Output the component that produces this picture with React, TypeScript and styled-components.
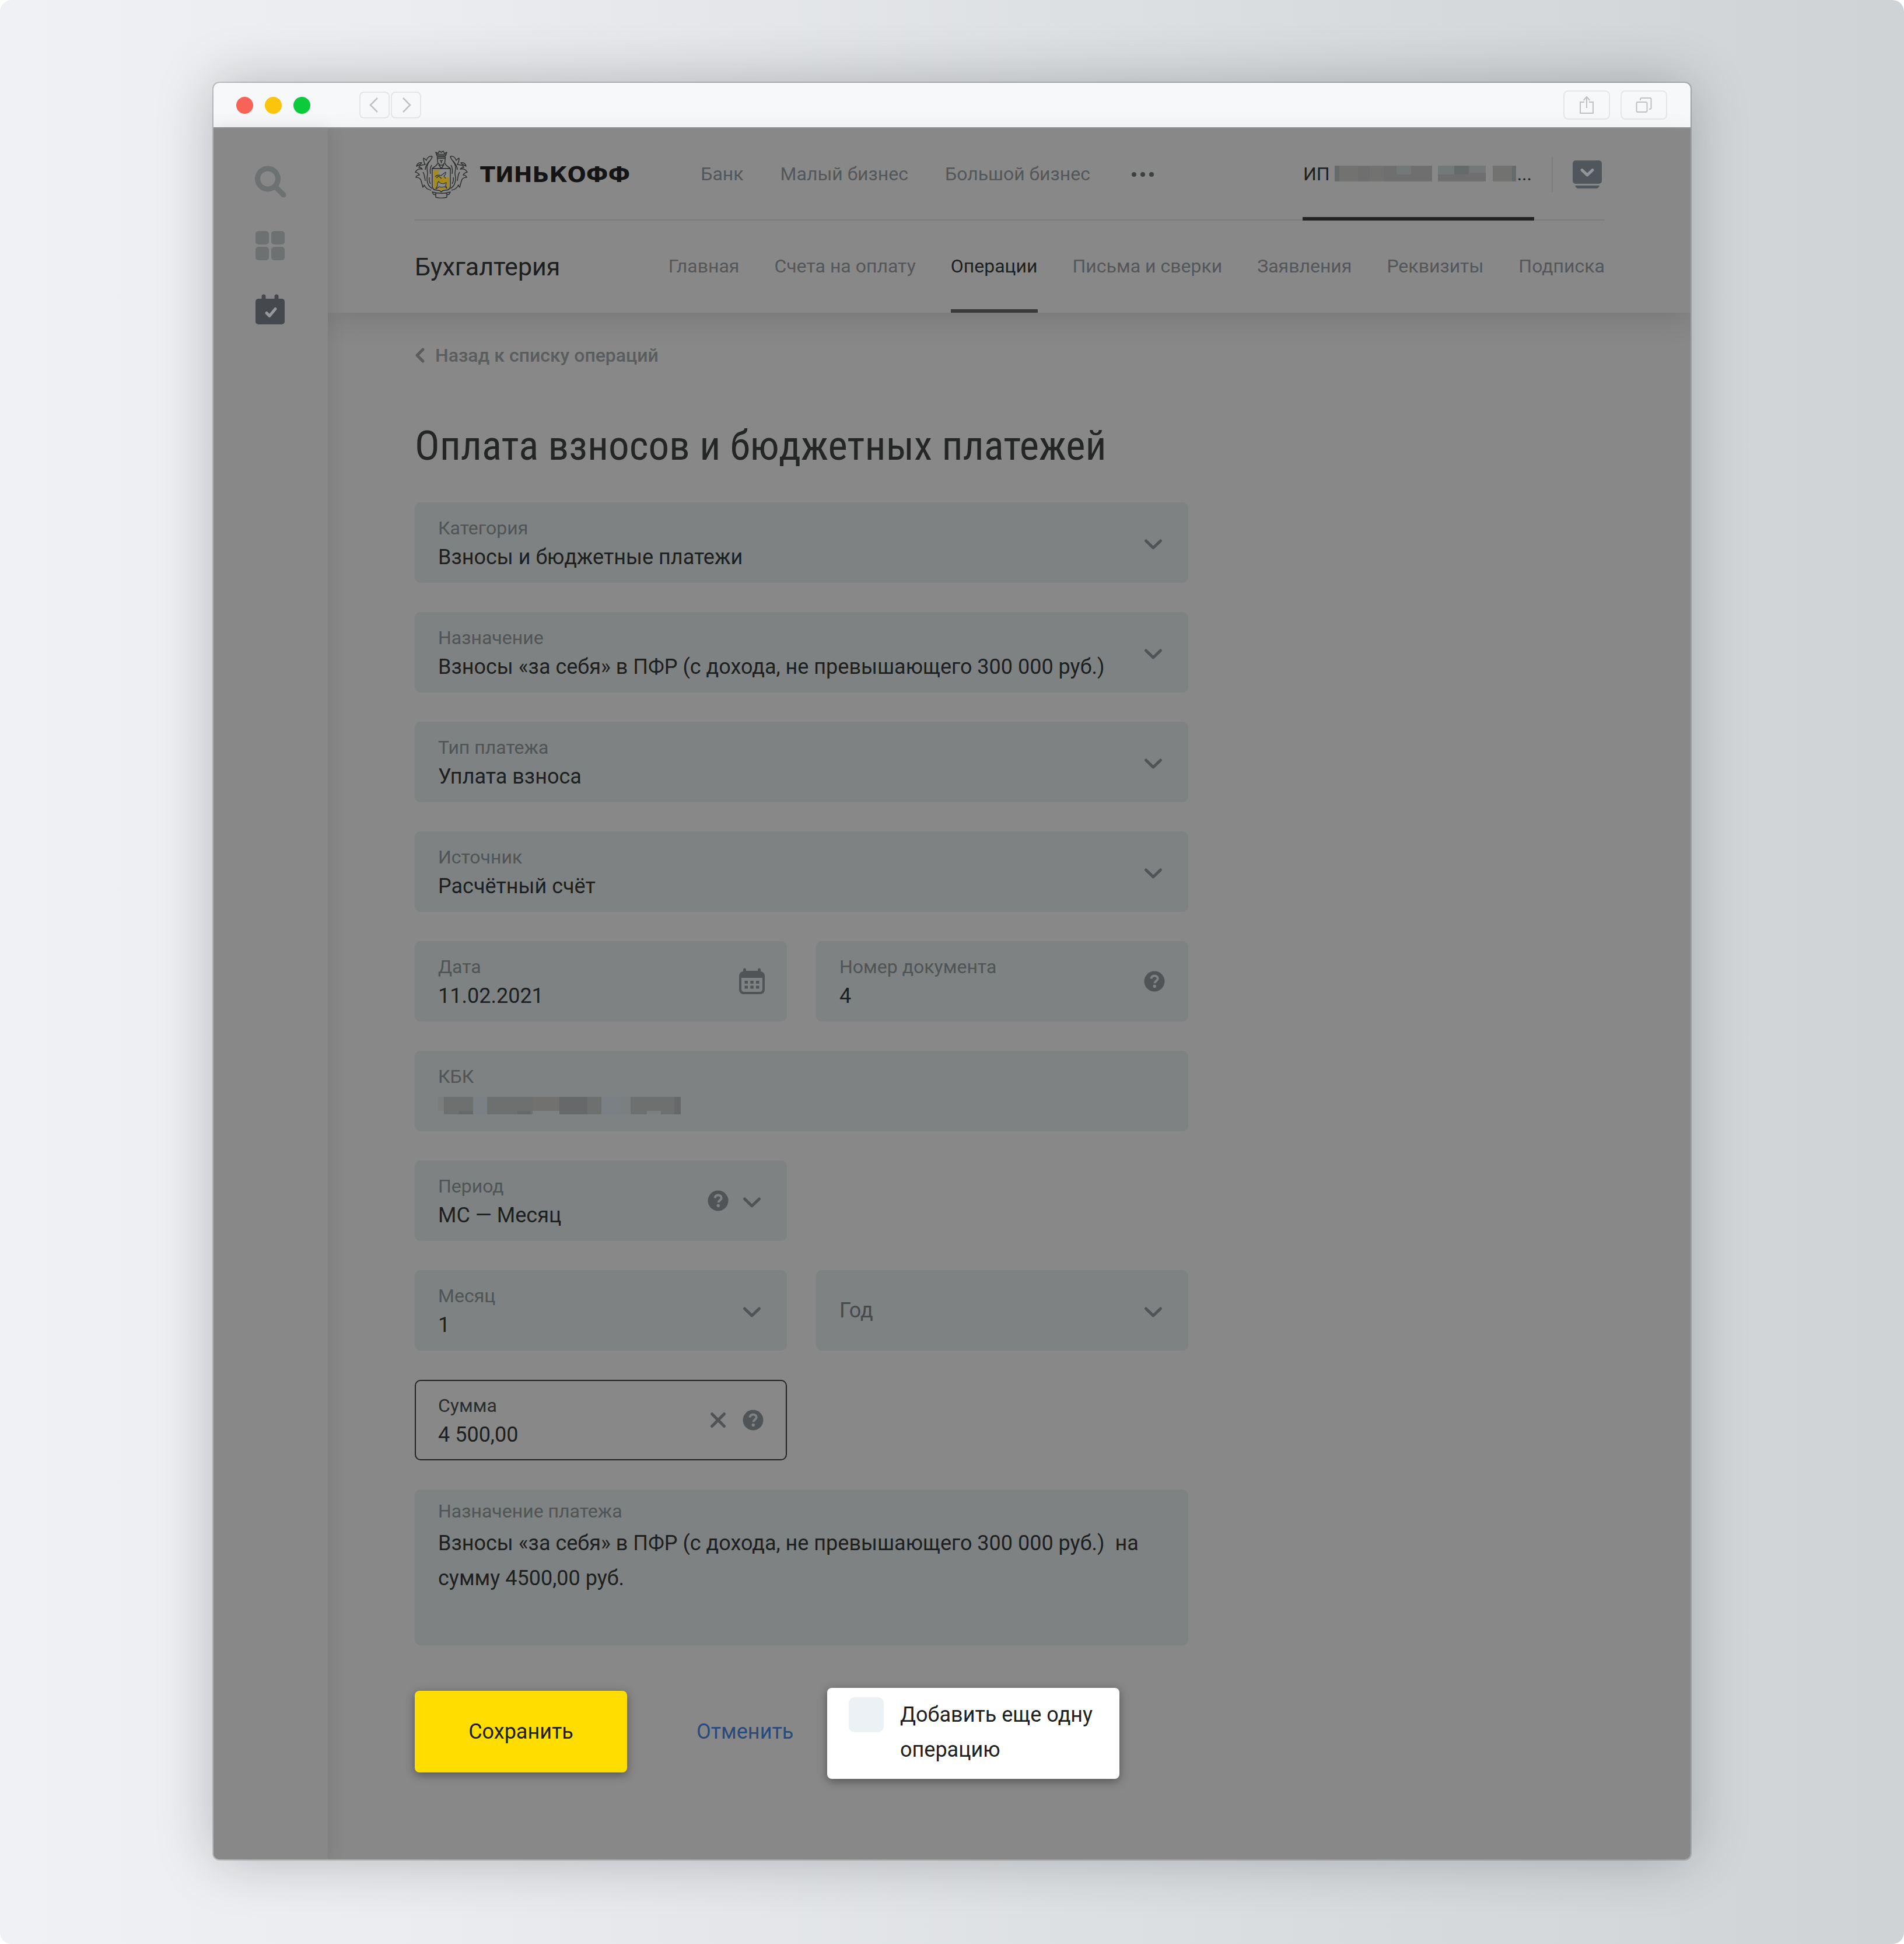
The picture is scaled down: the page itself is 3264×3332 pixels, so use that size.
import React from "react";
import styled, { createGlobalStyle, css } from "styled-components";

const ink = "#1d1f20";
const muted = "#54575a";
const iconTone = "#515456";
const surface = "#888888";
const fieldTone = "#7e8282";

const GlobalStyle = createGlobalStyle`
  *, *::before, *::after { box-sizing: border-box; }
  body {
    margin: 0;
    background: #ffffff;
    font-family: Roboto, "Liberation Sans", sans-serif;
    font-size: 32px;
    line-height: 40px;
    color: ${ink};
  }
  button, input, select, textarea { font: inherit; color: inherit; }
  svg { display: block; flex: none; }
`;

const plainButton = css`
  padding: 0;
  border: 0;
  background: none;
  cursor: pointer;
`;

const Backdrop = styled.div`
  min-height: 100vh;
  padding: 142px 366px;
  border-radius: 20px;
  background: linear-gradient(90deg, #f0f1f4, #ebecef 22%, #d6dadd 75%, #cfd3d6);
`;

const BrowserWindow = styled.div`
  border-radius: 10px;
  overflow: hidden;
  background: ${surface};
`;

const WindowShadow = styled.div`
  border-radius: 10px;
  box-shadow: 0 0 0 2px rgba(0, 0, 0, 0.16), 0 0 100px rgba(0, 0, 0, 0.24);
`;

const TitleBar = styled.div`
  display: flex;
  align-items: center;
  height: 78px;
  padding: 0 40px 0 39px;
  border-bottom: 2px solid #989a9a;
  background: #f6f8f9;
`;

const Lights = styled.div`
  display: flex;
  gap: 20px;
  margin-right: 84px;
`;

const Light = styled.span<{ $tone: string }>`
  width: 29px;
  height: 29px;
  border-radius: 50%;
  background: ${(p) => p.$tone};
`;

const NavPair = styled.div`
  display: flex;
  gap: 2px;
`;

const ToolPair = styled.div`
  display: flex;
  gap: 18px;
  margin-left: auto;
`;

const ChromeButton = styled.button<{ $wide?: boolean }>`
  ${plainButton}
  display: flex;
  align-items: center;
  justify-content: center;
  width: ${(p) => (p.$wide ? 80 : 52)}px;
  height: ${(p) => (p.$wide ? 50 : 46)}px;
  border: 2px solid #e4e7e9;
  border-radius: 8px;
  color: #bfc2c4;
`;

const Shell = styled.div`
  display: flex;
`;

const Sidebar = styled.nav`
  position: relative;
  z-index: 2;
  display: flex;
  flex: none;
  flex-direction: column;
  align-items: center;
  gap: 54px;
  width: 196px;
  padding: 63px 3px 0 0;
  background: ${surface};
  box-shadow: 0 0 30px rgba(0, 0, 0, 0.12);
`;

const SideLink = styled.a<{ $active?: boolean }>`
  color: ${(p) => (p.$active ? "#45494d" : "#6d7172")};
`;

const Main = styled.div`
  flex: 1;
  min-width: 0;
`;

const Header = styled.header`
  position: relative;
  z-index: 1;
  padding: 0 147px 0 149px;
  background: ${surface};
  box-shadow: 0 14px 44px rgba(0, 0, 0, 0.11);
`;

const HeaderRow = styled.div<{ $divided?: boolean }>`
  display: flex;
  align-items: center;
  height: 158px;
  ${(p) => p.$divided && "box-shadow: inset 0 -2px #7c7d7d;"}
`;

const Logo = styled.a`
  display: flex;
  align-items: center;
  gap: 20px;
  color: #141414;
  font-family: "DejaVu Sans", sans-serif;
  font-size: 38px;
  font-weight: 700;
  text-decoration: none;
`;

const SiteNav = styled.nav`
  display: flex;
  align-items: center;
  gap: 63px;
  margin-left: 121px;
`;

const SectionNav = styled.nav`
  display: flex;
  align-self: stretch;
  gap: 60px;
  margin-left: auto;
`;

const NavLink = styled.a<{ $active?: boolean }>`
  display: flex;
  align-items: center;
  padding-bottom: 3px;
  color: ${(p) => (p.$active ? ink : muted)};
  text-decoration: none;
  white-space: nowrap;
  ${(p) => p.$active && "box-shadow: inset 0 -6px #393b3b;"}
`;

const IconButton = styled.button`
  ${plainButton}
  color: ${iconTone};
`;

const UserTab = styled.button`
  ${plainButton}
  display: flex;
  align-items: center;
  align-self: stretch;
  gap: 2px;
  width: 397px;
  margin-left: auto;
  padding: 0 0 3px 1px;
  box-shadow: inset 0 -6px #222424;
  white-space: nowrap;
`;

const UserKind = styled.span`
  margin-right: 6px;
`;

const Rule = styled.span`
  width: 2px;
  height: 60px;
  margin: 0 34px 0 30px;
  background: #7c7e7e;
`;

const MenuButton = styled(IconButton)`
  margin-right: 5px;
  color: #50565b;
`;

const Section = styled.span`
  font-size: 43px;
  line-height: 60px;
`;

const Content = styled.main`
  padding: 53px 147px 149px 149px;
`;

const BackLink = styled.a`
  display: flex;
  align-items: center;
  gap: 17px;
  width: fit-content;
  color: #5a5d5e;
  font-weight: 500;
  text-decoration: none;
`;

const Title = styled.h1`
  margin: 93px 0 55px;
  color: #242626;
  font-family: "Roboto Condensed", Roboto, sans-serif;
  font-size: 71px;
  font-weight: 400;
  line-height: 84px;
`;

const Form = styled.form`
  display: grid;
  grid-template-columns: 1fr 1fr;
  gap: 50px;
  max-width: 1326px;
`;

const FieldBox = styled.div<{ $wide?: boolean; $focused?: boolean }>`
  display: flex;
  align-items: center;
  gap: 20px;
  height: 138px;
  padding: 0 ${(p) => (p.$focused ? 36 : 38)}px 0 ${(p) => (p.$focused ? 38 : 40)}px;
  border-radius: 10px;
  background: ${(p) => (p.$focused ? "transparent" : fieldTone)};
  ${(p) => p.$focused && "border: 2px solid #222424;"}
  ${(p) => p.$wide && "grid-column: 1 / -1;"}
`;

const FieldText = styled.div`
  display: flex;
  flex: 1;
  flex-direction: column;
  min-width: 0;
`;

const Label = styled.label<{ $strong?: boolean }>`
  color: ${(p) => (p.$strong ? "#2b2d2d" : "#505455")};
  line-height: 50px;
`;

const control = css`
  display: block;
  width: 100%;
  margin: 0;
  padding: 0;
  border: 0;
  outline: 0;
  background: transparent;
  font-size: 36px;
`;

const TextInput = styled.input`
  ${control}
  height: 50px;
  line-height: 50px;
`;

const Select = styled.select<{ $empty?: boolean }>`
  ${control}
  height: 50px;
  line-height: 50px;
  appearance: none;
  text-overflow: clip;
  color: ${(p) => (p.$empty ? "#474a4b" : ink)};
`;

const Masked = styled.div`
  display: flex;
  align-items: center;
  height: 50px;
`;

const IconGroup = styled.div<{ $apart?: boolean }>`
  display: flex;
  align-items: center;
  gap: ${(p) => (p.$apart ? 20 : 16)}px;
  color: ${iconTone};
`;

const AreaBox = styled.div`
  grid-column: 1 / -1;
  padding: 12px 40px 25px;
  border-radius: 10px;
  background: ${fieldTone};
`;

const TextArea = styled.textarea`
  ${control}
  height: 180px;
  line-height: 60px;
  resize: none;
  overflow: hidden;
`;

const Actions = styled.div`
  display: flex;
  grid-column: 1 / -1;
  align-items: stretch;
  height: 140px;
  margin-top: 28px;
  font-size: 36px;
`;

const lifted = css`
  border-radius: 8px;
  box-shadow: 0 4px 16px rgba(0, 0, 0, 0.4);
`;

const Save = styled.button`
  ${plainButton}
  ${lifted}
  width: 364px;
  background: #ffdd00;
`;

const Cancel = styled.button`
  ${plainButton}
  width: 343px;
  padding-left: 119px;
  color: #294a7d;
  text-align: left;
`;

const AddMore = styled.label`
  ${lifted}
  display: flex;
  align-items: flex-start;
  gap: 28px;
  width: 501px;
  margin: -5px 0 -11px;
  padding: 16px 37px;
  background: #ffffff;
  line-height: 60px;
`;

const Checkbox = styled.input`
  flex: none;
  width: 60px;
  height: 60px;
  margin: 0;
  appearance: none;
  border-radius: 10px;
  background: #ecf1f5;
`;

const Chevron = () => (
  <svg width="44" height="44" viewBox="0 0 44 44" fill="none" stroke="currentColor" strokeWidth="5" strokeLinecap="round" strokeLinejoin="round">
    <path d="M9.500 19 22 31 34.500 19" />
  </svg>
);

const Help = () => (
  <svg width="40" height="44" viewBox="0 0 40 44">
    <circle cx="20" cy="22" r="17.500" fill="currentColor" />
    <path d="M14.500 17.500c.4-3.200 2.600-5 5.700-5 3.200 0 5.500 1.900 5.500 4.700 0 4-5.200 4.300-5.200 8" fill="none" stroke={fieldTone} strokeWidth="4" />
    <circle cx="20.300" cy="30.500" r="2.700" fill={fieldTone} />
  </svg>
);

const Cross = () => (
  <svg width="40" height="44" viewBox="0 0 40 44" stroke="currentColor" strokeWidth="5" strokeLinecap="round">
    <path d="M9.500 11.500 30.500 32.500M30.500 11.500 9.500 32.500" />
  </svg>
);

const CalendarIcon = () => (
  <svg width="44" height="46" viewBox="0 0 44 46" fill="currentColor">
    <path fillRule="evenodd" d="M7 6V3a2.500 2.500 0 0 1 5 0v2h20V3a2.500 2.500 0 0 1 5 0v3c4 .3 7 3.200 7 8v22c0 6-3 9-9 9H9c-6 0-9-3-9-9V14C0 9.200 3 6.300 7 6ZM4 17v19c0 3.500 1.500 5 5 5h26c3.500 0 5-1.500 5-5V17Z" />
    <path d="M9.500 22h5.500v5H9.500zM19.300 22h5.500v5h-5.500zM29 22h5.500v5H29zM9.500 30.500h5.500v5H9.500zM19.300 30.500h5.500v5h-5.500zM29 30.500h5.500v5H29z" />
  </svg>
);

const SearchIcon = () => (
  <svg width="56" height="56" viewBox="0 0 56 56" fill="none" stroke="currentColor">
    <circle cx="24" cy="23.500" r="17.500" strokeWidth="9" />
    <path d="M37 37 51 51" strokeWidth="9" strokeLinecap="round" />
  </svg>
);

const GridIcon = () => (
  <svg width="56" height="56" viewBox="0 0 56 56" fill="currentColor">
    <rect x="3" y="3" width="23" height="23" rx="5" />
    <rect x="30" y="3" width="23" height="23" rx="5" />
    <rect x="3" y="30" width="23" height="23" rx="5" />
    <rect x="30" y="30" width="23" height="23" rx="5" />
  </svg>
);

const PlanIcon = () => (
  <svg width="56" height="56" viewBox="0 0 56 56">
    <rect x="3" y="9" width="50" height="44" rx="5" fill="currentColor" />
    <path d="M17 5v8M39 5v8" stroke="currentColor" strokeWidth="7" strokeLinecap="round" />
    <path d="M22 33.500 27 38.500 37 26.500" fill="none" stroke="#97999a" strokeWidth="5" strokeLinecap="round" strokeLinejoin="round" />
  </svg>
);

const Emblem = () => {
  const side = (
    <g>
      <path d="M30 10c-5-1-9 2-10 7-1-2-3-3-5-4 0 5 1 8 3 11-5 1-9 0-11 5 4 0 5 1 6 3-4-1-9 0-12 5 4 1 6 2 7 5-3 0-5 1-6 4 5 0 8 2 9 6l3 11c1-1 2-2 2-4 2 4 5 8 12 9" />
      <path d="M30 10c-1 7-9 10-9 19 0 4 1 7 1 11-1 6-2 10 0 15 1 4 4 8 8 10" />
      <path d="M25 18c-4 5-7 9-7 15M14 37c3 4 3 9 4 15M29 25c-3 5-3 10-2 15M25 46c-1 5 0 8 2 11" />
      <path d="M3 27c1-4 4-7 9-6-2 3-5 4-9 6Z" />
    </g>
  );
  return (
    <svg width="92" height="82" viewBox="0 0 92 82" fill="none" stroke="#2e3031" strokeWidth="1.500" strokeLinejoin="round">
      {side}
      <g transform="translate(91 0) scale(-1 1)">{side}</g>
      <path d="M38 9 36 3l4 2 2-4 3.500 2L49 1l2 4 4-2-2 6ZM38 6.500h15" />
      <path d="M38.500 11h14l-1 10-4 4h-4l-4-4ZM39 13.500h13M43 17l2.500 1 2.500-1M45.500 18v4" />
      <path d="M39 22c-1 4-6 6-9 9h31c-3-3-8-5-9-9M41 24l4.500 7 4.500-7" />
      <path d="M30 31h31v29c0 5-3 8-8 8-4 0-6 1-7.500 3-1.500-2-3.500-3-7.500-3-5 0-8-3-8-8Z" fill="#8b8d8e" />
      <path d="M32 33h10l-2 8 6 5h13v12c0 5-3 8-7 8-3 0-5 1-6.500 3-1.500-2-3-3-6-3-4.500 0-7.500-3-7.500-8Z" fill="#a68a1c" stroke="none" />
      <path d="M35 45c3-4 7-3 10-2l8-6c1 3-1 5-3 7l3 4M37 47l4-3 5 4" strokeWidth="1.200" />
      <path d="M36 66l3-6c-1-3 0-5 2-7 2 3 5 4 8 4l5-2-1 5 2 5-3-3-6 1-4-1Z" fill="#8b8d8e" strokeWidth="1.200" />
      <path d="M30 71c10 3 21 3 31 0l-2 4-4 1v4c-6 2-13 2-19 0v-4l-4-1ZM36 72v4M55 72v4" />
    </svg>
  );
};

const HiddenName = () => (
  <svg width="311" height="27" viewBox="0 0 311 27" shapeRendering="crispEdges">
    <path fill="#6e6f6e" d="M0 0h167v27H0zM177 0h82v27h-82zM271 0h40v27h-40z" />
    <path fill="#727271" d="M8 0h32v27H8zM60 0h24v27H60zM271 0h33v27h-33z" />
    <path fill="#747878" d="M106 0h25v15h-25zM177 0h28v15h-28zM231 0h28v12h-28z" />
    <path fill="#676a6b" d="M0 0h8v27H0zM205 0h24v15h-24zM304 0h7v27h-7z" />
  </svg>
);

const HiddenCode = () => (
  <svg width="416" height="30" viewBox="0 0 416 30" shapeRendering="crispEdges">
    <path fill="#7b7d7c" d="M0 0h10v24H0z" />
    <path fill="#6e6f6f" d="M10 0h50v30H10zM84 0h78v30H84zM330 0h86v30h-86zM256 0h24v30h-24z" />
    <path fill="#717270" d="M162 0h46v24h-46z" />
    <path fill="#67686a" d="M36 24h24v6H36zM208 0h48v30h-48zM136 24h22v6h-22zM405 0h11v30h-11z" />
    <path fill="#7a8084" d="M60 0h24v30H60zM280 0h32v30h-32z" />
    <path fill="#7b7f7f" d="M312 0h18v30h-18zM358 24h24v6h-24z" />
  </svg>
);

type ChoiceProps = { id: string; label: string; value: string; wide?: boolean; help?: boolean };

const Choice = ({ id, label, value, wide, help }: ChoiceProps) => (
  <FieldBox $wide={wide}>
    <FieldText>
      <Label htmlFor={id}>{label}</Label>
      <Select id={id} defaultValue={value}>
        <option>{value}</option>
      </Select>
    </FieldText>
    <IconGroup>
      {help && (
        <IconButton type="button" aria-label="Подсказка">
          <Help />
        </IconButton>
      )}
      <Chevron />
    </IconGroup>
  </FieldBox>
);

const siteLinks = ["Банк", "Малый бизнес", "Большой бизнес"];
const sectionLinks = ["Главная", "Счета на оплату", "Операции", "Письма и сверки", "Заявления", "Реквизиты", "Подписка"];

export default function App() {
  return (
    <Backdrop>
      <GlobalStyle />
      <WindowShadow>
        <BrowserWindow>
          <TitleBar>
            <Lights>
              <Light $tone="#f86358" />
              <Light $tone="#fdc40c" />
              <Light $tone="#0bcb3b" />
            </Lights>
            <NavPair>
              <ChromeButton aria-label="Назад">
                <svg width="24" height="28" viewBox="0 0 24 28" fill="none" stroke="currentColor" strokeWidth="2.500">
                  <path d="M17 2 5 14l12 12" />
                </svg>
              </ChromeButton>
              <ChromeButton aria-label="Вперёд">
                <svg width="24" height="28" viewBox="0 0 24 28" fill="none" stroke="currentColor" strokeWidth="2.500">
                  <path d="M7 2l12 12L7 26" />
                </svg>
              </ChromeButton>
            </NavPair>
            <ToolPair>
              <ChromeButton $wide aria-label="Поделиться">
                <svg width="26" height="32" viewBox="0 0 26 32" fill="none" stroke="currentColor" strokeWidth="2">
                  <path d="M9 11H2v19h22V11h-7M13 21V2M7.500 8 13 2l5.500 6" />
                </svg>
              </ChromeButton>
              <ChromeButton $wide aria-label="Вкладки">
                <svg width="28" height="28" viewBox="0 0 28 28" fill="none" stroke="currentColor" strokeWidth="2">
                  <rect x="1.500" y="9" width="18" height="17" rx="2" />
                  <path d="M8 6V4a2 2 0 0 1 2-2h14.500a2 2 0 0 1 2 2v15a2 2 0 0 1-2 2H23" />
                </svg>
              </ChromeButton>
            </ToolPair>
          </TitleBar>
          <Shell>
            <Sidebar aria-label="Разделы">
              <SideLink href="#search" aria-label="Поиск">
                <SearchIcon />
              </SideLink>
              <SideLink href="#products" aria-label="Продукты">
                <GridIcon />
              </SideLink>
              <SideLink href="#accounting" aria-label="Бухгалтерия" $active>
                <PlanIcon />
              </SideLink>
            </Sidebar>
            <Main>
              <Header>
                <HeaderRow $divided>
                  <Logo href="#home">
                    <Emblem />
                    ТИНЬКОФФ
                  </Logo>
                  <SiteNav>
                    {siteLinks.map((name) => (
                      <NavLink key={name} href="#site">
                        {name}
                      </NavLink>
                    ))}
                    <IconButton aria-label="Ещё">
                      <svg width="48" height="40" viewBox="0 0 48 40" fill="#3c4042">
                        <circle cx="12" cy="20" r="4" />
                        <circle cx="27" cy="20" r="4" />
                        <circle cx="42" cy="20" r="4" />
                      </svg>
                    </IconButton>
                  </SiteNav>
                  <UserTab>
                    <UserKind>ИП</UserKind>
                    <HiddenName />
                    <span>...</span>
                  </UserTab>
                  <Rule />
                  <MenuButton aria-label="Меню профиля">
                    <svg width="50" height="50" viewBox="0 0 50 50">
                      <rect x="0" y="1" width="50" height="40" rx="5" fill="currentColor" />
                      <path d="M4 44h42c-1 3-3 5-6 5H10c-3 0-5-2-6-5Z" fill="currentColor" />
                      <path d="M16 17.500 25 26l9-8.500" fill="none" stroke="#939596" strokeWidth="5" strokeLinecap="round" strokeLinejoin="round" />
                    </svg>
                  </MenuButton>
                </HeaderRow>
                <HeaderRow>
                  <Section>Бухгалтерия</Section>
                  <SectionNav>
                    {sectionLinks.map((name) => (
                      <NavLink key={name} href="#section" $active={name === "Операции"}>
                        {name}
                      </NavLink>
                    ))}
                  </SectionNav>
                </HeaderRow>
              </Header>
              <Content>
                <BackLink href="#operations">
                  <svg width="18" height="28" viewBox="0 0 18 28" fill="none" stroke="currentColor" strokeWidth="5" strokeLinecap="round" strokeLinejoin="round">
                    <path d="M14 4 4 14l10 10" />
                  </svg>
                  Назад к списку операций
                </BackLink>
                <Title>Оплата взносов и бюджетных платежей</Title>
                <Form onSubmit={(e) => e.preventDefault()}>
                  <Choice wide id="category" label="Категория" value="Взносы и бюджетные платежи" />
                  <Choice wide id="purpose" label="Назначение" value="Взносы «за себя» в ПФР (с дохода, не превышающего 300 000 руб.)" />
                  <Choice wide id="kind" label="Тип платежа" value="Уплата взноса" />
                  <Choice wide id="source" label="Источник" value="Расчётный счёт" />
                  <FieldBox>
                    <FieldText>
                      <Label htmlFor="date">Дата</Label>
                      <TextInput id="date" defaultValue="11.02.2021" />
                    </FieldText>
                    <IconButton type="button" aria-label="Календарь">
                      <CalendarIcon />
                    </IconButton>
                  </FieldBox>
                  <FieldBox>
                    <FieldText>
                      <Label htmlFor="number">Номер документа</Label>
                      <TextInput id="number" defaultValue="4" />
                    </FieldText>
                    <IconButton type="button" aria-label="Подсказка">
                      <Help />
                    </IconButton>
                  </FieldBox>
                  <FieldBox $wide>
                    <FieldText>
                      <Label as="span">КБК</Label>
                      <Masked>
                        <HiddenCode />
                      </Masked>
                    </FieldText>
                  </FieldBox>
                  <Choice help id="period" label="Период" value="МС — Месяц" />
                  <span />
                  <Choice id="month" label="Месяц" value="1" />
                  <FieldBox>
                    <Select $empty aria-label="Год" defaultValue="Год">
                      <option>Год</option>
                    </Select>
                    <IconGroup>
                      <Chevron />
                    </IconGroup>
                  </FieldBox>
                  <FieldBox $focused>
                    <FieldText>
                      <Label htmlFor="sum" $strong>
                        Сумма
                      </Label>
                      <TextInput id="sum" defaultValue="4 500,00" />
                    </FieldText>
                    <IconGroup $apart>
                      <IconButton type="button" aria-label="Очистить">
                        <Cross />
                      </IconButton>
                      <IconButton type="button" aria-label="Подсказка">
                        <Help />
                      </IconButton>
                    </IconGroup>
                  </FieldBox>
                  <span />
                  <AreaBox>
                    <Label htmlFor="details">Назначение платежа</Label>
                    <TextArea
                      id="details"
                      defaultValue={"Взносы «за себя» в ПФР (с дохода, не превышающего 300 000 руб.)  на сумму 4500,00 руб."}
                    />
                  </AreaBox>
                  <Actions>
                    <Save type="submit">Сохранить</Save>
                    <Cancel type="button">Отменить</Cancel>
                    <AddMore>
                      <Checkbox type="checkbox" />
                      <span>Добавить еще одну операцию</span>
                    </AddMore>
                  </Actions>
                </Form>
              </Content>
            </Main>
          </Shell>
        </BrowserWindow>
      </WindowShadow>
    </Backdrop>
  );
}
